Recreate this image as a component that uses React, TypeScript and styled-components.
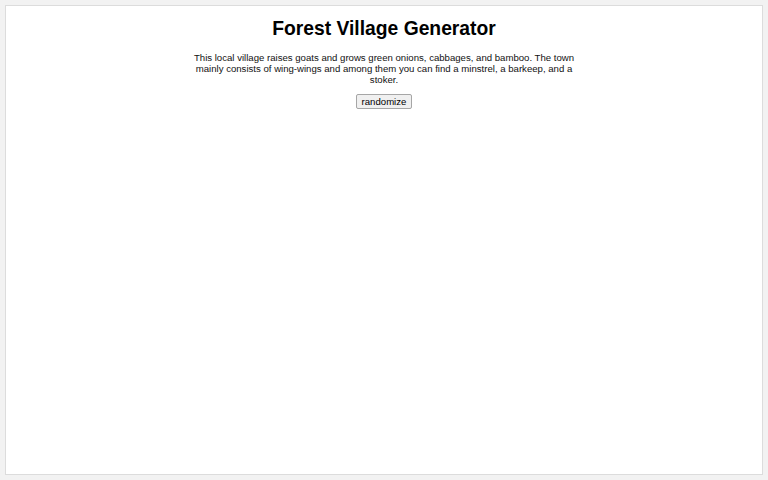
import styled, { createGlobalStyle } from "styled-components";

const GlobalStyle = createGlobalStyle`
    html, body {
        margin: 0;
        padding: 0;
        height: 100%;
        background: #f2f2f2;
        font-family: "Liberation Sans", Arial, sans-serif;
    }
    #root {
        height: 100%;
    }
`;

const StyledPage = styled.div`
    box-sizing: border-box;
    height: 100vh;
    padding: 5px;
    display: flex;
`;

const StyledPanel = styled.div`
    flex: 1;
    background: #ffffff;
    border: 1px solid #dcdcdc;
    display: flex;
    flex-direction: column;
    align-items: center;
    padding-top: 11px;
`;

const StyledTitle = styled.h1`
    margin: 0;
    font-size: 19.3px;
    font-weight: 700;
    line-height: 24px;
    color: #000;
`;

const StyledText = styled.p`
    margin: 11px 0 0 0;
    width: 386px;
    font-size: 9.6px;
    line-height: 11px;
    text-align: center;
    color: #111;
`;

const StyledButton = styled.button`
    margin-top: 9px;
    font-family: "Liberation Sans", Arial, sans-serif;
    font-size: 9.6px;
    line-height: 11px;
    padding: 1px 5px;
    background: #f0f0f0;
    border: 1px solid #a6a6a6;
    border-radius: 2px;
    color: #000;
`;

export default function App() {
    return (
        <StyledPage>
            <GlobalStyle />
            <StyledPanel>
                <StyledTitle>Forest Village Generator</StyledTitle>
                <StyledText>
                    This local village raises goats and grows green onions, cabbages, and bamboo. The town
                    mainly consists of wing-wings and among them you can find a minstrel, a barkeep, and a
                    stoker.
                </StyledText>
                <StyledButton>randomize</StyledButton>
            </StyledPanel>
        </StyledPage>
    );
}
